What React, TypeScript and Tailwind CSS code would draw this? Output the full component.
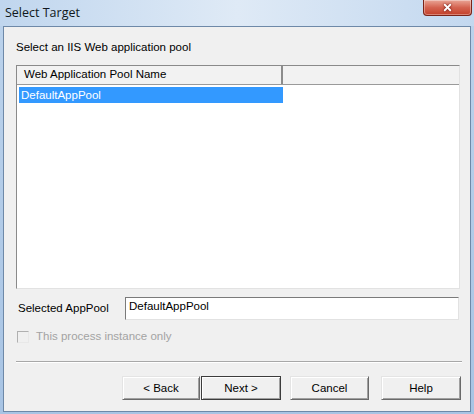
import { X } from "lucide-react";

const font = { fontFamily: '"Liberation Sans", Arial, sans-serif' };

interface BtnProps {
  label: string;
  isDefault?: boolean;
  className?: string;
}

const DlgButton = ({ label, isDefault, className }: BtnProps) => {
  return (
    <div
      className={`h-[24px] w-[78px] flex items-center justify-center text-black bg-[#f0f0f0] border ${
        isDefault
          ? "border-[#3c3c3c] shadow-[inset_1px_1px_0_#ffffff,inset_-1px_-1px_0_#a0a0a0]"
          : "border-t-[#e4e4e4] border-l-[#e4e4e4] border-r-[#6a6a6a] border-b-[#6a6a6a] shadow-[inset_1px_1px_0_#ffffff,inset_-1px_-1px_0_#a0a0a0]"
      } ${className ?? ""}`}
    >
      {label}
    </div>
  );
};

const App = () => {
  return (
    <div
      style={font}
      className="w-[474px] h-[414px] flex flex-col relative overflow-hidden bg-gradient-to-b from-[#bcd3ec] to-[#a8c4e4]"
    >
      {/* title bar */}
      <div className="h-[26px] flex items-center pl-[5px] bg-gradient-to-r from-[#c0d6ee] via-[#dfeaf6] to-[#c3d8ef]">
        <span
          className="text-[12.5px] text-[#101820]"
          style={{ fontFamily: '"Open Sans", "Liberation Sans", sans-serif' }}
        >
          Select Target
        </span>
      </div>
      <div className="absolute top-0 right-[2px] w-[49px] h-[16px] rounded-b-[4px] border border-t-0 border-[#7a2418] bg-gradient-to-b from-[#e9a596] via-[#d46350] to-[#c33f28] flex items-center justify-center shadow-[inset_0_0_0_1px_rgba(255,255,255,0.35)]">
        <X size={11} strokeWidth={4} className="text-white drop-shadow-[0_0_1px_rgba(80,0,0,0.9)]" />
      </div>

      {/* client area */}
      <div className="flex-1 mx-[3px] mb-[2px] bg-[#f0f0f0] border border-[#6e89a8] flex flex-col text-[11.5px] text-black">
        <div className="mt-[13px] ml-[12px] leading-[14px]">
          Select an IIS Web application pool
        </div>

        {/* list view */}
        <div className="mt-[11px] ml-[12px] w-[444px] h-[224px] bg-white border border-t-[#8a8a8a] border-l-[#8a8a8a] border-r-[#e2e2e2] border-b-[#e2e2e2] flex flex-col">
          <div className="h-[19px] flex bg-[#f2f2f2] border-b border-[#9a9a9a]">
            <div className="w-[266px] pl-[7px] flex items-center border-r-2 border-r-[#8c8c8c]">
              Web Application Pool Name
            </div>
            <div className="flex-1" />
          </div>
          <div className="mt-[2px] ml-[2px] w-[264px] h-[16px] bg-[#3399ff] text-white flex items-center pl-[2px] leading-[14px]">
            DefaultAppPool
          </div>
        </div>

        {/* selected app pool */}
        <div className="mt-[8px] ml-[14px] flex items-center">
          <span className="w-[107px]">Selected AppPool</span>
          <div className="w-[334px] h-[23px] bg-white border border-t-[#7a7a7a] border-l-[#7a7a7a] border-r-[#e2e2e2] border-b-[#e2e2e2] pl-[3px] leading-[14px] pt-[1px]">
            DefaultAppPool
          </div>
        </div>

        {/* checkbox */}
        <div className="mt-[8px] ml-[13px] flex items-center text-[#a3a3a3]">
          <div className="w-[12px] h-[12px] border border-t-[#b0b0b0] border-l-[#b0b0b0] border-r-[#e8e8e8] border-b-[#e8e8e8] bg-[#f0f0f0]" />
          <span className="ml-[7px]">This process instance only</span>
        </div>

        {/* separator */}
        <div className="mt-[16px] ml-[12px] w-[446px] h-[2px] border-t border-[#a8a8a8] border-b border-b-white" />

        {/* buttons */}
        <div className="mt-[13px] flex pl-[118px]">
          <DlgButton label="< Back" />
          <DlgButton label="Next >" isDefault className="ml-[1px] w-[80px]" />
          <DlgButton label="Cancel" className="ml-[9px] w-[79px]" />
          <DlgButton label="Help" className="ml-[12px] w-[80px]" />
        </div>
      </div>
    </div>
  );
};

export default App;
